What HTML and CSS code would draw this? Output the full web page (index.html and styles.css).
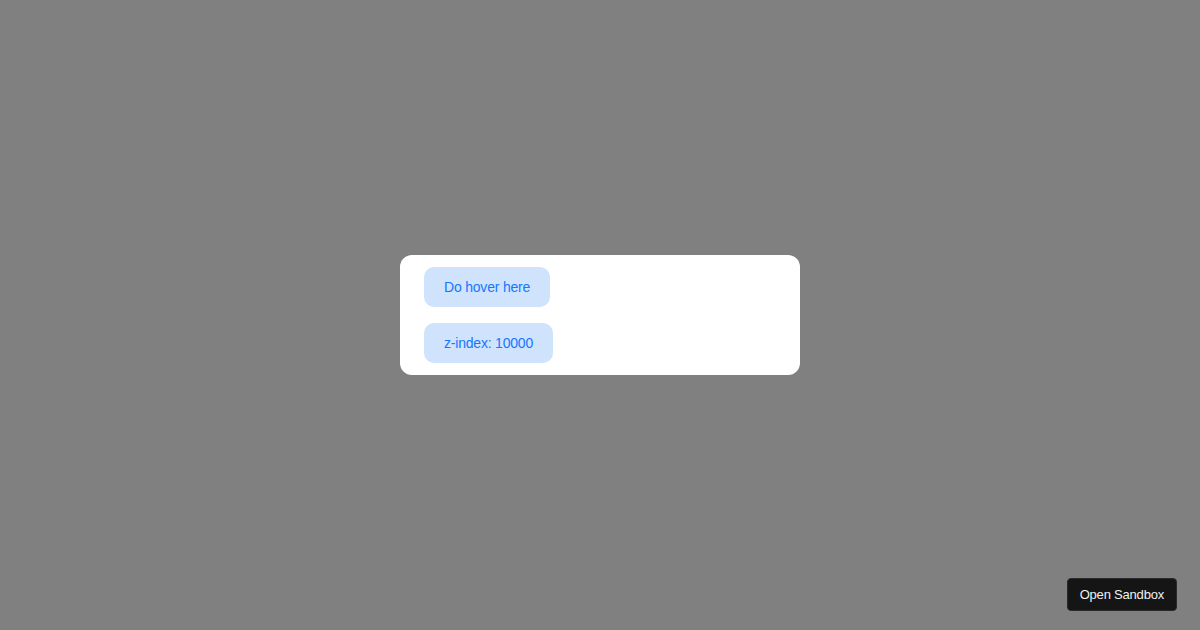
FILE: index.html
```html
<!DOCTYPE html>
<html>
<head>
<meta charset="utf-8">
<link rel="stylesheet" href="styles.css">
</head>
<body>
<div class="stage">
  <div class="card">
    <button class="chip">Do hover here</button>
    <button class="chip">z-index: 10000</button>
  </div>
</div>
<button class="sandbox">Open Sandbox</button>
</body>
</html>
```
FILE: styles.css
```css
html, body {
  margin: 0;
  padding: 0;
  width: 1200px;
  height: 630px;
  background: #808080;
  overflow: hidden;
  font-family: "Liberation Sans", Arial, sans-serif;
}
.stage {
  width: 1200px;
  height: 630px;
  display: flex;
  align-items: center;
  justify-content: center;
}
.card {
  box-sizing: border-box;
  width: 400px;
  height: 120px;
  background: #fff;
  border-radius: 12px;
  padding: 12px 24px;
  display: flex;
  flex-direction: column;
  align-items: flex-start;
  gap: 16px;
}
.chip {
  height: 40px;
  padding: 0 20px;
  border: none;
  border-radius: 10px;
  background: #cfe3fc;
  color: #1677ff;
  font-family: "Liberation Sans", Arial, sans-serif;
  font-size: 14px;
  letter-spacing: -0.2px;
}
.sandbox {
  position: absolute;
  right: 23px;
  bottom: 19px;
  height: 33px;
  padding: 0 12px;
  border: 1px solid #2a2a2a;
  border-radius: 4px;
  background: #151515;
  color: #f0f0f0;
  font-family: "Liberation Sans", Arial, sans-serif;
  font-size: 13px;
  letter-spacing: -0.2px;
}
```
